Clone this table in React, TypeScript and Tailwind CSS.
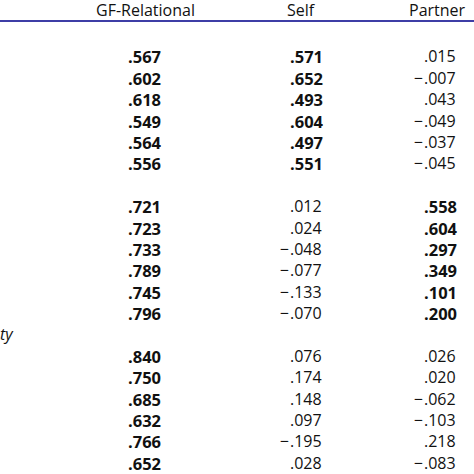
import React from "react";

type Cell = { v: string; b?: boolean };
type Row = { label?: string; cells?: Cell[] };

const g1: [string, string, string][] = [
  [".567", ".571", ".015"],
  [".602", ".652", "−.007"],
  [".618", ".493", ".043"],
  [".549", ".604", "−.049"],
  [".564", ".497", "−.037"],
  [".556", ".551", "−.045"],
];
const g2: [string, string, string][] = [
  [".721", ".012", ".558"],
  [".723", ".024", ".604"],
  [".733", "−.048", ".297"],
  [".789", "−.077", ".349"],
  [".745", "−.133", ".101"],
  [".796", "−.070", ".200"],
];
const g3: [string, string, string][] = [
  [".840", ".076", ".026"],
  [".750", ".174", ".020"],
  [".685", ".148", "−.062"],
  [".632", ".097", "−.103"],
  [".766", "−.195", ".218"],
  [".652", ".028", "−.083"],
];

const rows: Row[] = [
  {},
  ...g1.map((r) => ({ cells: [{ v: r[0], b: true }, { v: r[1], b: true }, { v: r[2] }] })),
  {},
  ...g2.map((r) => ({ cells: [{ v: r[0], b: true }, { v: r[1] }, { v: r[2], b: true }] })),
  { label: "ty" },
  ...g3.map((r) => ({ cells: [{ v: r[0], b: true }, { v: r[1] }, { v: r[2] }] })),
];

// decimal-aligned number: sign hangs to the left of a fixed point
const Num = ({ c, signW }: { c: Cell; signW: string }) => {
  const neg = c.v.startsWith("−");
  return (
    <div className={`flex ${c.b ? "font-bold text-[16.5px]" : ""}`}>
      <span className={`${signW} text-right pr-[1px]`}>{neg ? "−" : ""}</span>
      <span>{neg ? c.v.slice(1) : c.v}</span>
    </div>
  );
};

export default function App() {
  return (
    <div className="w-[474px] h-[474px] overflow-hidden bg-white text-[16px] text-[#111] font-['Open_Sans',sans-serif]">
      <div className="grid grid-cols-[90px_120px_150px_114px] h-[20px] leading-[20px]">
        <div />
        <div className="pl-[6px]">GF-Relational</div>
        <div className="pl-[77px]">Self</div>
        <div className="pl-[49px]">Partner</div>
      </div>
      <div className="h-[2px] bg-[#3e3ea6]" />
      <div className="pt-[3px]">
        {rows.map((r, i) => (
          <div key={i} className="grid grid-cols-[90px_120px_150px_114px] h-[21.4px] leading-[21.4px]">
            <div className="italic">{r.label ?? ""}</div>
            {r.cells ? (
              <>
                <Num c={r.cells[0]} signW="w-[38px]" />
                <Num c={r.cells[1]} signW="w-[80px]" />
                <Num c={r.cells[2]} signW="w-[64px]" />
              </>
            ) : (
              <>
                <div />
                <div />
                <div />
              </>
            )}
          </div>
        ))}
      </div>
    </div>
  );
}
